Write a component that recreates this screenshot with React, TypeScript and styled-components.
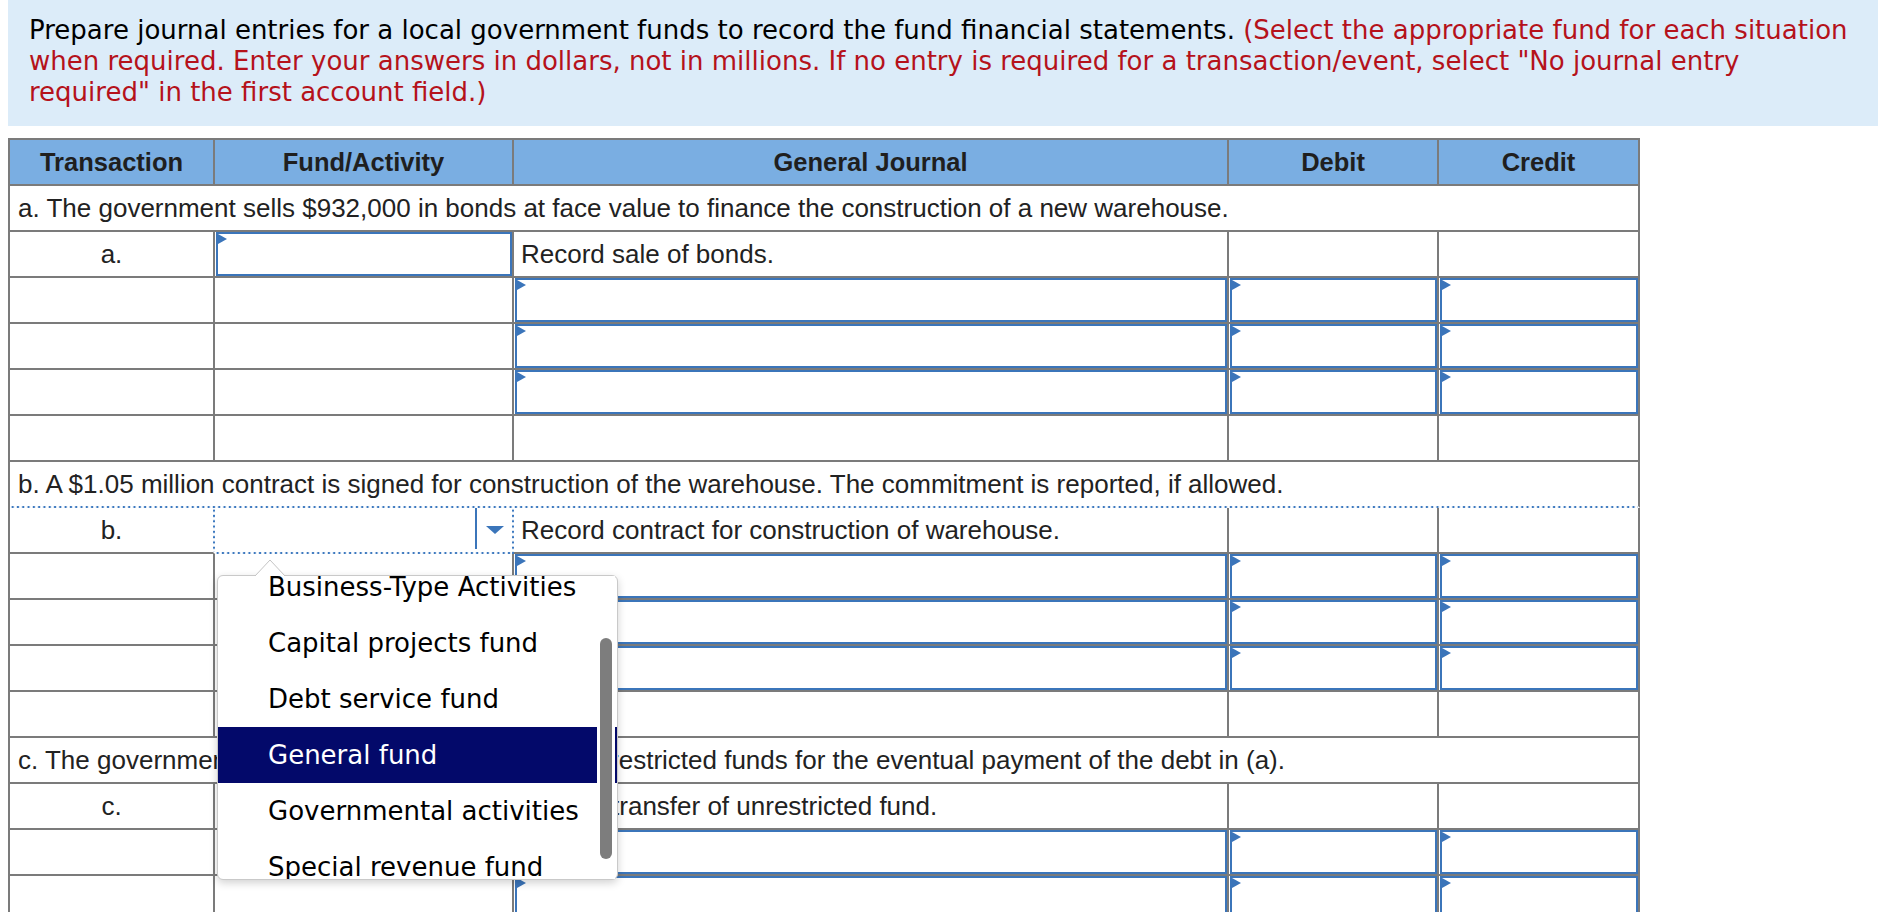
import React from 'react';
import styled, { createGlobalStyle, css } from 'styled-components';

const BLUE = '#3b75ba';
const DOT = '#3d79bf';
const GRID = '#7b7b7b';

const GlobalStyle = createGlobalStyle`
  html, body { margin: 0; padding: 0; background: #ffffff; }
  body { padding-left: 8px; font-family: "Liberation Sans", Arial, Helvetica, sans-serif; overflow: hidden; }
`;

const dotsBottom = css`
  border-bottom-color: transparent;
  background-image: radial-gradient(circle, ${DOT} 1.1px, transparent 1.5px);
  background-size: 5.3px 2px;
  background-repeat: repeat-x;
  background-position: 0 100%;
  background-origin: border-box;
`;

const dotsRight = css`
  border-right-color: transparent;
  background-image: radial-gradient(circle, ${DOT} 1.1px, transparent 1.5px);
  background-size: 2px 5.3px;
  background-repeat: repeat-y;
  background-position: 100% 0;
  background-origin: border-box;
`;

const Page = styled.main`
  display: flex;
  flex-direction: column;
  gap: 12px;
`;

const Instructions = styled.div`
  background: #dcecf9;
  padding: 15px 21px 18px;
  font-family: "DejaVu Sans", Verdana, sans-serif;
  font-size: 26px;
  line-height: 31px;
  color: #000;
  white-space: nowrap;
`;

const Emphasis = styled.span`
  color: #b5121b;
`;

const Grid = styled.div`
  display: grid;
  grid-template-columns: 205px 299px 715px 210px 201px;
  grid-auto-rows: 46px;
  width: 1632px;
  box-sizing: border-box;
  border-top: 2px solid ${GRID};
  border-left: 2px solid ${GRID};
  font-size: 26px;
  color: #222;
`;

const cellBase = css`
  box-sizing: border-box;
  border-right: 2px solid ${GRID};
  border-bottom: 2px solid ${GRID};
  display: flex;
  align-items: center;
  min-width: 0;
  white-space: nowrap;
`;

const HeaderCell = styled.div`
  ${cellBase};
  justify-content: center;
  background: #7aaee2;
  font-weight: 700;
  font-size: 25.5px;
  color: #1f1f1f;
`;

const DescCell = styled.div<{ $dotted?: boolean }>`
  ${cellBase};
  grid-column: 1 / -1;
  padding-left: 8px;
  ${(p) => p.$dotted && dotsBottom}
`;

const LabelCell = styled.div<{ $dotted?: boolean }>`
  ${cellBase};
  justify-content: center;
  ${(p) => p.$dotted && dotsRight}
`;

const TextCell = styled.div`
  ${cellBase};
  padding-left: 7px;
`;

const PlainCell = styled.div`
  ${cellBase};
`;

const InputCell = styled.div`
  ${cellBase};
  align-items: stretch;
  padding-left: 1px;
`;

const InputBox = styled.div`
  position: relative;
  flex: 1;
  box-sizing: border-box;
  border: 2px solid ${BLUE};
  background: #fff;

  &::before {
    content: '';
    position: absolute;
    top: 0;
    left: 0;
    border-left: 9px solid ${BLUE};
    border-top: 5.5px solid transparent;
    border-bottom: 5.5px solid transparent;
  }
`;

const SelectCell = styled.div`
  ${cellBase};
  position: relative;
  align-items: flex-start;
  justify-content: flex-end;
  border-right-color: transparent;
  border-bottom-color: transparent;
  background-image: radial-gradient(circle, ${DOT} 1.1px, transparent 1.5px),
    radial-gradient(circle, ${DOT} 1.1px, transparent 1.5px);
  background-size: 5.3px 2px, 2px 5.3px;
  background-repeat: repeat-x, repeat-y;
  background-position: 0 100%, 100% 0;
  background-origin: border-box;
`;

const ArrowArea = styled.div`
  box-sizing: border-box;
  width: 37px;
  height: 41px;
  border-left: 2px solid ${BLUE};
  display: flex;
  align-items: center;
  justify-content: center;
  padding-top: 2px;
`;

const Arrow = styled.span`
  width: 0;
  height: 0;
  border-left: 9px solid transparent;
  border-right: 9px solid transparent;
  border-top: 8px solid ${BLUE};
`;

const Popover = styled.div`
  position: absolute;
  top: 67px;
  left: 2px;
  z-index: 10;
  width: 401px;
  height: 305px;
  box-sizing: border-box;
  background: #fff;
  border: 1px solid #c9c9c9;
  border-radius: 6px;
  box-shadow: 0 3px 8px rgba(0, 0, 0, 0.18);
  font-family: "DejaVu Sans", Verdana, sans-serif;
  font-size: 26px;
  color: #000;
`;

const Notch = styled.svg`
  position: absolute;
  top: -17px;
  left: 36px;
  display: block;
`;

const OptionViewport = styled.div`
  height: 100%;
  overflow: hidden;
  border-radius: 5px;
`;

const OptionList = styled.ul`
  list-style: none;
  margin: -17px 0 0;
  padding: 0;
`;

const OptionItem = styled.li<{ $selected?: boolean }>`
  height: 56px;
  display: flex;
  align-items: center;
  padding-left: 50px;
  white-space: nowrap;
  background: ${(p) => (p.$selected ? '#03096a' : 'transparent')};
  color: ${(p) => (p.$selected ? '#ffffff' : '#000000')};
`;

const ScrollTrack = styled.div`
  position: absolute;
  top: 0;
  bottom: 0;
  right: 2px;
  width: 18px;
  background: #fff;
`;

const ScrollThumb = styled.div`
  position: absolute;
  top: 62px;
  left: 3px;
  width: 12px;
  height: 221px;
  border-radius: 6px;
  background: #7d7d7d;
`;

const options = [
  'Business-Type Activities',
  'Capital projects fund',
  'Debt service fund',
  'General fund',
  'Governmental activities',
  'Special revenue fund',
];

const Input = () => (
  <InputCell>
    <InputBox />
  </InputCell>
);

const EntryRow = () => (
  <>
    <PlainCell />
    <PlainCell />
    <Input />
    <Input />
    <Input />
  </>
);

const BlankRow = () => (
  <>
    <PlainCell />
    <PlainCell />
    <PlainCell />
    <PlainCell />
    <PlainCell />
  </>
);

const FundDropdown = () => (
  <Popover>
    <Notch width="32" height="17" viewBox="0 0 32 17">
      <path d="M1 17 L16 1 L31 17" fill="#ffffff" stroke="#c4c4c4" strokeWidth="1" />
    </Notch>
    <OptionViewport>
      <OptionList>
        {options.map((o) => (
          <OptionItem key={o} $selected={o === 'General fund'}>
            {o}
          </OptionItem>
        ))}
      </OptionList>
    </OptionViewport>
    <ScrollTrack>
      <ScrollThumb />
    </ScrollTrack>
  </Popover>
);

export default function App() {
  return (
    <>
      <GlobalStyle />
      <Page>
        <Instructions>
          Prepare journal entries for a local government funds to record the fund financial statements.{' '}
          <Emphasis>(Select the appropriate fund for each situation</Emphasis>
          <br />
          <Emphasis>
            when required. Enter your answers in dollars, not in millions. If no entry is required for a
            transaction/event, select "No journal entry
          </Emphasis>
          <br />
          <Emphasis>required" in the first account field.)</Emphasis>
        </Instructions>

        <Grid>
          <HeaderCell>Transaction</HeaderCell>
          <HeaderCell>Fund/Activity</HeaderCell>
          <HeaderCell>General Journal</HeaderCell>
          <HeaderCell>Debit</HeaderCell>
          <HeaderCell>Credit</HeaderCell>

          <DescCell>
            a. The government sells $932,000 in bonds at face value to finance the construction of a new warehouse.
          </DescCell>
          <LabelCell>a.</LabelCell>
          <Input />
          <TextCell>Record sale of bonds.</TextCell>
          <PlainCell />
          <PlainCell />
          <EntryRow />
          <EntryRow />
          <EntryRow />
          <BlankRow />

          <DescCell $dotted>
            b. A $1.05 million contract is signed for construction of the warehouse. The commitment is reported, if
            allowed.
          </DescCell>
          <LabelCell $dotted>b.</LabelCell>
          <SelectCell>
            <ArrowArea>
              <Arrow />
            </ArrowArea>
            <FundDropdown />
          </SelectCell>
          <TextCell>Record contract for construction of warehouse.</TextCell>
          <PlainCell />
          <PlainCell />
          <EntryRow />
          <EntryRow />
          <EntryRow />
          <BlankRow />

          <DescCell>
            c. The government transfers $96,000 of formerly unrestricted funds for the eventual payment of the debt in
            (a).
          </DescCell>
          <LabelCell>c.</LabelCell>
          <PlainCell />
          <TextCell>Record transfer of unrestricted fund.</TextCell>
          <PlainCell />
          <PlainCell />
          <EntryRow />
          <EntryRow />
          <EntryRow />
        </Grid>
      </Page>
    </>
  );
}
